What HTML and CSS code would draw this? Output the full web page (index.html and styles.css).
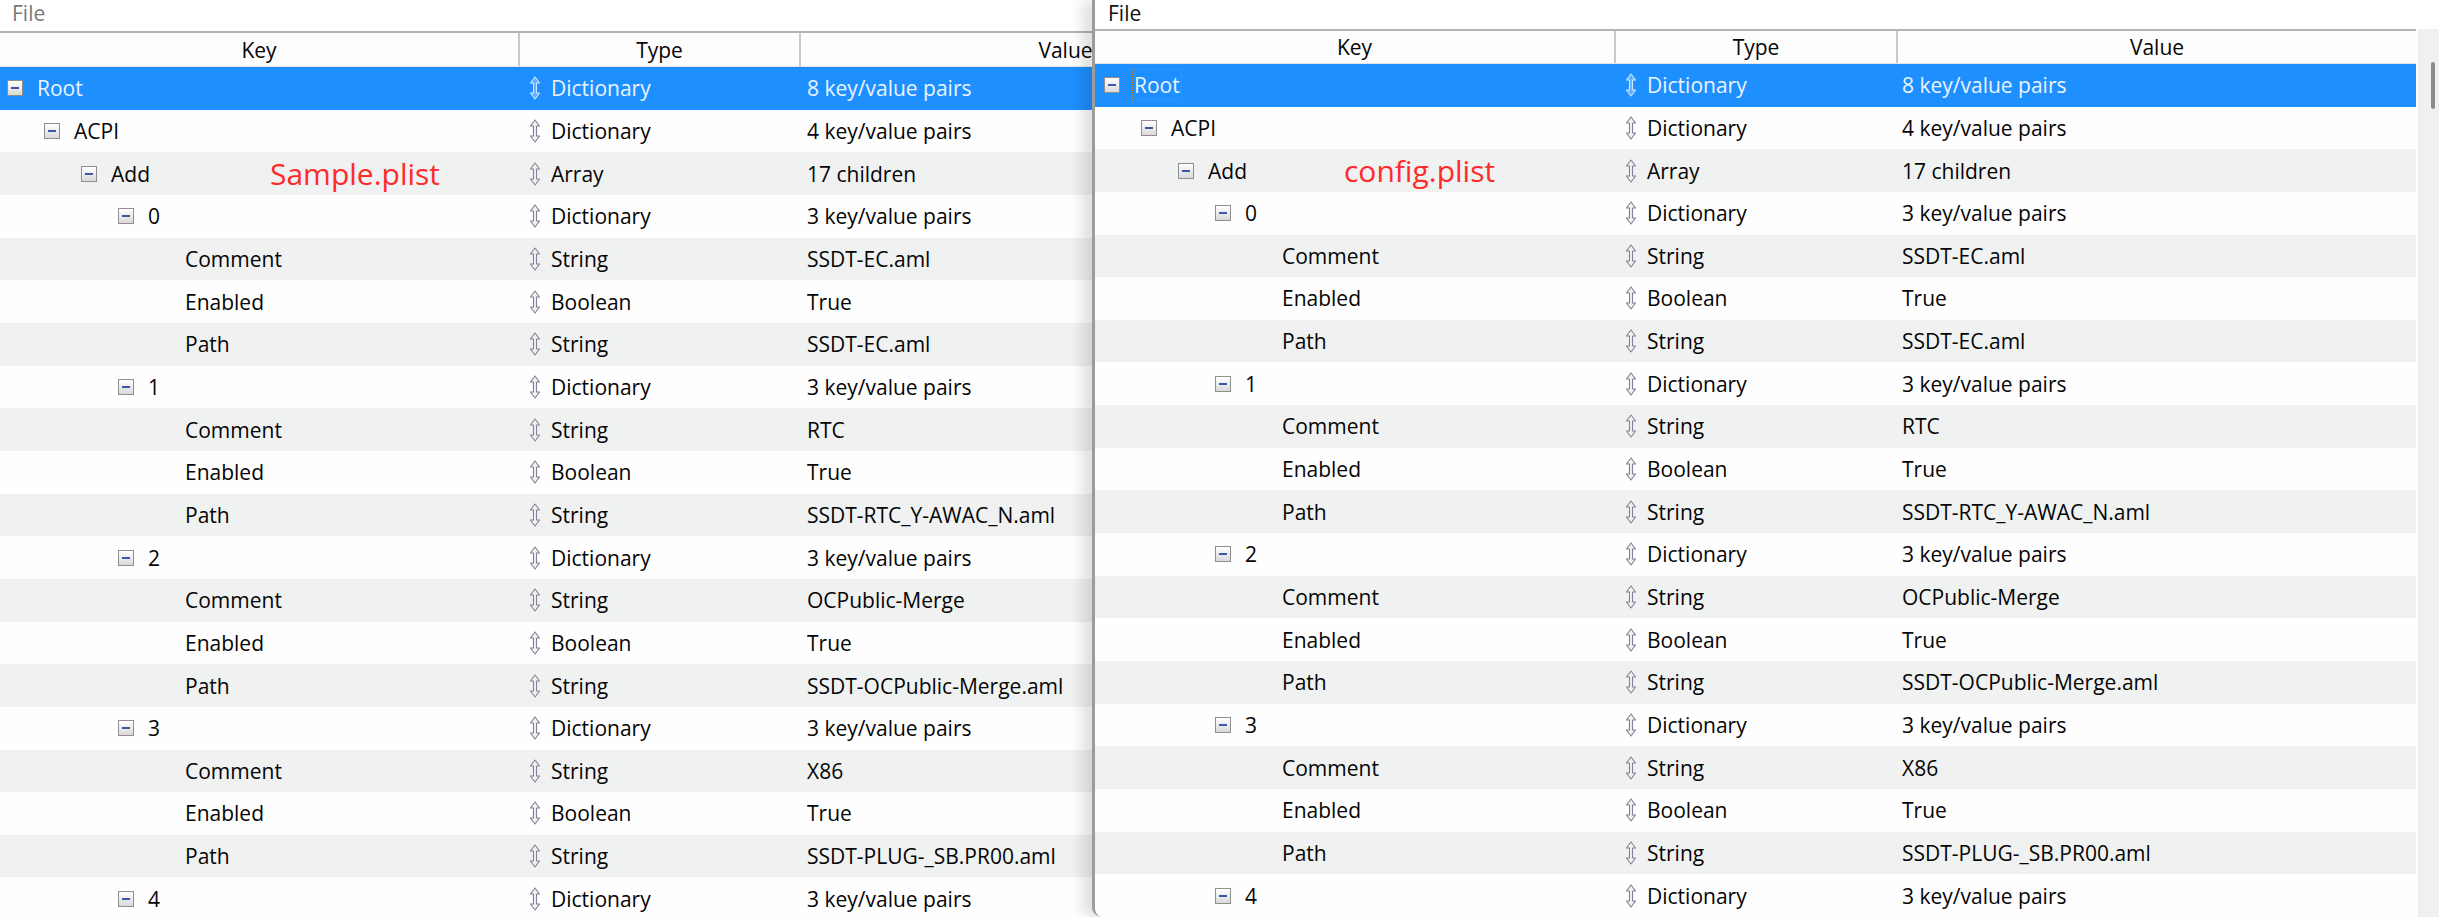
FILE: index.html
```html
<!DOCTYPE html>
<html>
<head>
<meta charset="utf-8">
<link rel="stylesheet" href="styles.css">
</head>
<body>
<div class="desktop">
  <section class="win win-left">
    <div class="menubar"><span class="menu inactive">File</span></div>
    <div class="table">
      <div class="header">
        <div class="hcell">Key</div>
        <div class="hcell">Type</div>
        <div class="hcell">Value</div>
      </div>
      <div class="rows">
        <div class="row sel"><div class="k" style="--d:0"><span class="exp"></span><span class="kt">Root</span></div><div class="t"><span class="arr"></span>Dictionary</div><div class="v">8 key/value pairs</div></div>
        <div class="row"><div class="k" style="--d:1"><span class="exp"></span><span class="kt">ACPI</span></div><div class="t"><span class="arr"></span>Dictionary</div><div class="v">4 key/value pairs</div></div>
        <div class="row alt"><div class="k" style="--d:2"><span class="exp"></span><span class="kt">Add</span><span class="note note-left">Sample.plist</span></div><div class="t"><span class="arr"></span>Array</div><div class="v">17 children</div></div>
        <div class="row"><div class="k" style="--d:3"><span class="exp"></span><span class="kt">0</span></div><div class="t"><span class="arr"></span>Dictionary</div><div class="v">3 key/value pairs</div></div>
        <div class="row alt"><div class="k" style="--d:4"><span class="noexp"></span><span class="kt">Comment</span></div><div class="t"><span class="arr"></span>String</div><div class="v">SSDT-EC.aml</div></div>
        <div class="row"><div class="k" style="--d:4"><span class="noexp"></span><span class="kt">Enabled</span></div><div class="t"><span class="arr"></span>Boolean</div><div class="v">True</div></div>
        <div class="row alt"><div class="k" style="--d:4"><span class="noexp"></span><span class="kt">Path</span></div><div class="t"><span class="arr"></span>String</div><div class="v">SSDT-EC.aml</div></div>
        <div class="row"><div class="k" style="--d:3"><span class="exp"></span><span class="kt">1</span></div><div class="t"><span class="arr"></span>Dictionary</div><div class="v">3 key/value pairs</div></div>
        <div class="row alt"><div class="k" style="--d:4"><span class="noexp"></span><span class="kt">Comment</span></div><div class="t"><span class="arr"></span>String</div><div class="v">RTC</div></div>
        <div class="row"><div class="k" style="--d:4"><span class="noexp"></span><span class="kt">Enabled</span></div><div class="t"><span class="arr"></span>Boolean</div><div class="v">True</div></div>
        <div class="row alt"><div class="k" style="--d:4"><span class="noexp"></span><span class="kt">Path</span></div><div class="t"><span class="arr"></span>String</div><div class="v">SSDT-RTC_Y-AWAC_N.aml</div></div>
        <div class="row"><div class="k" style="--d:3"><span class="exp"></span><span class="kt">2</span></div><div class="t"><span class="arr"></span>Dictionary</div><div class="v">3 key/value pairs</div></div>
        <div class="row alt"><div class="k" style="--d:4"><span class="noexp"></span><span class="kt">Comment</span></div><div class="t"><span class="arr"></span>String</div><div class="v">OCPublic-Merge</div></div>
        <div class="row"><div class="k" style="--d:4"><span class="noexp"></span><span class="kt">Enabled</span></div><div class="t"><span class="arr"></span>Boolean</div><div class="v">True</div></div>
        <div class="row alt"><div class="k" style="--d:4"><span class="noexp"></span><span class="kt">Path</span></div><div class="t"><span class="arr"></span>String</div><div class="v">SSDT-OCPublic-Merge.aml</div></div>
        <div class="row"><div class="k" style="--d:3"><span class="exp"></span><span class="kt">3</span></div><div class="t"><span class="arr"></span>Dictionary</div><div class="v">3 key/value pairs</div></div>
        <div class="row alt"><div class="k" style="--d:4"><span class="noexp"></span><span class="kt">Comment</span></div><div class="t"><span class="arr"></span>String</div><div class="v">X86</div></div>
        <div class="row"><div class="k" style="--d:4"><span class="noexp"></span><span class="kt">Enabled</span></div><div class="t"><span class="arr"></span>Boolean</div><div class="v">True</div></div>
        <div class="row alt"><div class="k" style="--d:4"><span class="noexp"></span><span class="kt">Path</span></div><div class="t"><span class="arr"></span>String</div><div class="v">SSDT-PLUG-_SB.PR00.aml</div></div>
        <div class="row"><div class="k" style="--d:3"><span class="exp"></span><span class="kt">4</span></div><div class="t"><span class="arr"></span>Dictionary</div><div class="v">3 key/value pairs</div></div>
      </div>
    </div>
  </section>

  <section class="win win-right">
    <div class="menubar"><span class="menu">File</span></div>
    <div class="body">
      <div class="table">
        <div class="header">
          <div class="hcell">Key</div>
          <div class="hcell">Type</div>
          <div class="hcell">Value</div>
        </div>
        <div class="rows">
          <div class="row sel"><div class="k" style="--d:0"><span class="exp"></span><span class="kt focus">Root</span></div><div class="t"><span class="arr"></span>Dictionary</div><div class="v">8 key/value pairs</div></div>
          <div class="row"><div class="k" style="--d:1"><span class="exp"></span><span class="kt">ACPI</span></div><div class="t"><span class="arr"></span>Dictionary</div><div class="v">4 key/value pairs</div></div>
          <div class="row alt"><div class="k" style="--d:2"><span class="exp"></span><span class="kt">Add</span><span class="note note-right">config.plist</span></div><div class="t"><span class="arr"></span>Array</div><div class="v">17 children</div></div>
          <div class="row"><div class="k" style="--d:3"><span class="exp"></span><span class="kt">0</span></div><div class="t"><span class="arr"></span>Dictionary</div><div class="v">3 key/value pairs</div></div>
          <div class="row alt"><div class="k" style="--d:4"><span class="noexp"></span><span class="kt">Comment</span></div><div class="t"><span class="arr"></span>String</div><div class="v">SSDT-EC.aml</div></div>
          <div class="row"><div class="k" style="--d:4"><span class="noexp"></span><span class="kt">Enabled</span></div><div class="t"><span class="arr"></span>Boolean</div><div class="v">True</div></div>
          <div class="row alt"><div class="k" style="--d:4"><span class="noexp"></span><span class="kt">Path</span></div><div class="t"><span class="arr"></span>String</div><div class="v">SSDT-EC.aml</div></div>
          <div class="row"><div class="k" style="--d:3"><span class="exp"></span><span class="kt">1</span></div><div class="t"><span class="arr"></span>Dictionary</div><div class="v">3 key/value pairs</div></div>
          <div class="row alt"><div class="k" style="--d:4"><span class="noexp"></span><span class="kt">Comment</span></div><div class="t"><span class="arr"></span>String</div><div class="v">RTC</div></div>
          <div class="row"><div class="k" style="--d:4"><span class="noexp"></span><span class="kt">Enabled</span></div><div class="t"><span class="arr"></span>Boolean</div><div class="v">True</div></div>
          <div class="row alt"><div class="k" style="--d:4"><span class="noexp"></span><span class="kt">Path</span></div><div class="t"><span class="arr"></span>String</div><div class="v">SSDT-RTC_Y-AWAC_N.aml</div></div>
          <div class="row"><div class="k" style="--d:3"><span class="exp"></span><span class="kt">2</span></div><div class="t"><span class="arr"></span>Dictionary</div><div class="v">3 key/value pairs</div></div>
          <div class="row alt"><div class="k" style="--d:4"><span class="noexp"></span><span class="kt">Comment</span></div><div class="t"><span class="arr"></span>String</div><div class="v">OCPublic-Merge</div></div>
          <div class="row"><div class="k" style="--d:4"><span class="noexp"></span><span class="kt">Enabled</span></div><div class="t"><span class="arr"></span>Boolean</div><div class="v">True</div></div>
          <div class="row alt"><div class="k" style="--d:4"><span class="noexp"></span><span class="kt">Path</span></div><div class="t"><span class="arr"></span>String</div><div class="v">SSDT-OCPublic-Merge.aml</div></div>
          <div class="row"><div class="k" style="--d:3"><span class="exp"></span><span class="kt">3</span></div><div class="t"><span class="arr"></span>Dictionary</div><div class="v">3 key/value pairs</div></div>
          <div class="row alt"><div class="k" style="--d:4"><span class="noexp"></span><span class="kt">Comment</span></div><div class="t"><span class="arr"></span>String</div><div class="v">X86</div></div>
          <div class="row"><div class="k" style="--d:4"><span class="noexp"></span><span class="kt">Enabled</span></div><div class="t"><span class="arr"></span>Boolean</div><div class="v">True</div></div>
          <div class="row alt"><div class="k" style="--d:4"><span class="noexp"></span><span class="kt">Path</span></div><div class="t"><span class="arr"></span>String</div><div class="v">SSDT-PLUG-_SB.PR00.aml</div></div>
          <div class="row"><div class="k" style="--d:3"><span class="exp"></span><span class="kt">4</span></div><div class="t"><span class="arr"></span>Dictionary</div><div class="v">3 key/value pairs</div></div>
        </div>
      </div>
      <div class="scrollbar"><div class="thumb"></div></div>
    </div>
  </section>
</div>
</body>
</html>
```
FILE: styles.css
```css
* { box-sizing: border-box; }
html, body { margin: 0; padding: 0; }
body {
  width: 2439px;
  height: 917px;
  overflow: hidden;
  background: #ffffff;
  font-family: "Open Sans", "Noto Sans", sans-serif;
  font-size: 21px;
  color: #050505;
}
.desktop {
  display: flex;
  height: 917px;
}
.win {
  display: flex;
  flex-direction: column;
  overflow: hidden;
  background: #fff;
}
.win-left {
  width: 1092px;
  flex: none;
  --kpad: 7px;
  --c1: 518px;
  --c2: 281px;
  --c3: 531px;
}
.win-right {
  flex: 1;
  position: relative;
  border-left: 3px solid #9c9c9c;
  border-bottom-left-radius: 10px;
  box-shadow: -10px 0 14px rgba(0,0,0,0.12);
  --kpad: 9px;
  --c1: 519px;
  --c2: 282px;
  --c3: 520px;
}
.menubar {
  height: 31px;
  flex: none;
  display: flex;
  align-items: flex-start;
  padding-left: 12px;
  padding-top: 0;
  font-size: 21px;
  line-height: 26px;
}
.win-right .menubar { height: 29px; padding-left: 13px; }
.menu { color: #111; }
.menu.inactive { color: #7a7a7a; }

.body {
  flex: 1;
  display: flex;
  min-height: 0;
}
.table {
  display: flex;
  flex-direction: column;
  flex: none;
  width: calc(var(--c1) + var(--c2) + var(--c3));
}
.header {
  display: grid;
  grid-template-columns: var(--c1) var(--c2) var(--c3);
  height: 36px;
  border-top: 2px solid #b3b3b3;
  border-bottom: 1px solid #e4e4e4;
  background: #fdfdfd;
}
.hcell {
  display: flex;
  align-items: center;
  justify-content: center;
  border-left: 2px solid #c9c9c9;
  color: #050505;
}
.hcell:first-child { border-left: none; }
.rows { display: flex; flex-direction: column; }
.row {
  display: grid;
  grid-template-columns: var(--c1) var(--c2) var(--c3);
  height: 42.667px;
  align-items: center;
  background: #fefefe;
}
.row.alt { background: #f0f2f1; }
.row.sel { background: #1e8fff; color: #eaf3ff; }
.k {
  position: relative;
  display: flex;
  align-items: center;
  padding-left: calc(var(--kpad) + var(--d) * 37px);
  white-space: nowrap;
}
.exp, .noexp {
  width: 16px;
  height: 16px;
  margin-right: 14px;
  flex: none;
}
.exp {
  position: relative;
  border: 1px solid #8f8f8f;
  background: linear-gradient(#ffffff, #d9d9d9);
}
.exp::after {
  content: "";
  position: absolute;
  left: 3px;
  top: 6px;
  width: 8px;
  height: 2px;
  background: #3b57a8;
}
.kt { display: inline-block; }
.kt.focus { outline: 1px dotted #c07a3a; outline-offset: 1px; }
.t {
  display: flex;
  align-items: center;
  padding-left: 11px;
  white-space: nowrap;
}
.arr {
  width: 12px;
  height: 24px;
  margin-right: 10px;
  flex: none;
  background:
    no-repeat center / 12px 24px
    url("data:image/svg+xml;utf8,<svg xmlns='http://www.w3.org/2000/svg' viewBox='0 0 12 24'><path d='M6 1 L10.5 7 L7.5 7 L7.5 17 L10.5 17 L6 23 L1.5 17 L4.5 17 L4.5 7 L1.5 7 Z' fill='%23f4f2ea' stroke='%23877f9c' stroke-width='1.1' stroke-linejoin='round'/></svg>");
}
.row.sel .arr {
  background:
    no-repeat center / 12px 24px
    url("data:image/svg+xml;utf8,<svg xmlns='http://www.w3.org/2000/svg' viewBox='0 0 12 24'><path d='M6 1 L10.5 7 L7.5 7 L7.5 17 L10.5 17 L6 23 L1.5 17 L4.5 17 L4.5 7 L1.5 7 Z' fill='%2360b0ff' stroke='%23cfe6ff' stroke-width='1.1' stroke-linejoin='round'/></svg>");
}
.v {
  padding-left: 8px;
  white-space: nowrap;
}
.win-right .v { padding-left: 6px; }
.note {
  position: absolute;
  top: 50%;
  transform: translateY(-52%);
  color: #ff2a2a;
  font-size: 30px;
  white-space: nowrap;
}
.note-left { left: 270px; }
.note-right { left: 249px; }
.scrollbar {
  flex: 1;
  background: #f0f0f0;
  position: relative;
  margin-left: 2px;
}
.thumb {
  position: absolute;
  left: 13px;
  top: 33px;
  width: 4px;
  height: 47px;
  border-radius: 2px;
  background: #8a8a8a;
}
```
